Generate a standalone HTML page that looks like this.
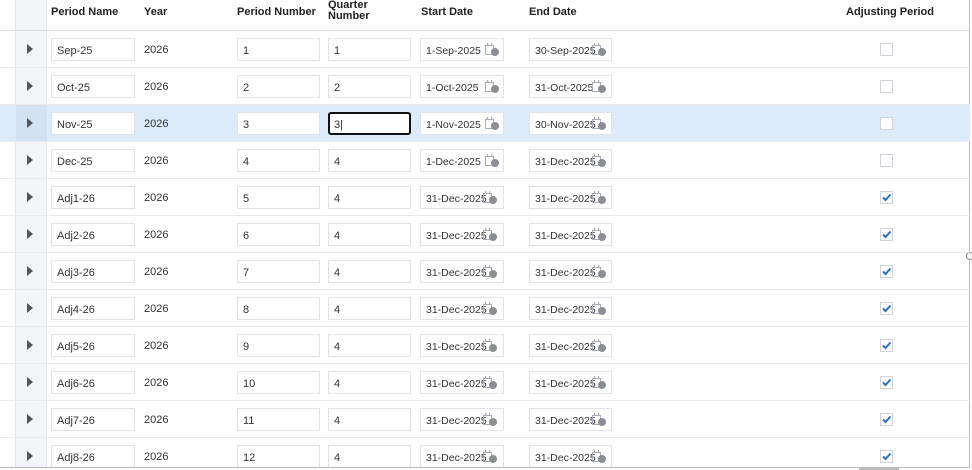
<!DOCTYPE html>
<html><head><meta charset="utf-8"><style>
*{box-sizing:border-box;margin:0;padding:0}
body{width:972px;height:470px;overflow:hidden;background:#fff;font-family:"Liberation Sans",Arial,sans-serif;font-size:11px;color:#333;position:relative}
.lc{position:absolute;left:15px;top:0;width:32px;height:467px;background:#f3f5f8;border-left:1px solid #e2e6ea;border-right:1px solid #e6e9ec}
.hd{position:absolute;top:0;left:0;width:970px;height:31px;border-bottom:1px solid #d8dce0}
.h{position:absolute;font-weight:bold;font-size:11px;color:#222;top:6px}
.r{position:absolute;left:0;width:970px;height:37px;border-bottom:1px solid #e8eaec}
.r.sel{background:#dcebf9}
.r.sel .lcc{background:#d3e2f0}
.lcc{position:absolute;left:16px;top:0;width:31px;height:36px}
.ar{position:absolute;left:27px;top:13px;width:0;height:0;border-left:6px solid #555;border-top:5px solid transparent;border-bottom:5px solid transparent}
.i{position:absolute;top:7px;height:23px;background:#fff;border:1px solid #dfe3e7;padding:6px 0 0 5px;font-size:11px;color:#333;white-space:nowrap;overflow:hidden}
.d{font-size:10.5px}
.y{position:absolute;left:144px;top:13px}
.cal{position:absolute;top:3px;width:16px;height:15px}
.cb{position:absolute;left:880px;top:12px;width:13px;height:13px;border:1px solid #cfd3d7;background:#fff}
.cb.c svg{position:absolute;left:0px;top:0px}
</style></head><body>
<div class="lc"></div>
<div class="hd">
<div class="h" style="left:51px">Period Name</div>
<div class="h" style="left:144px">Year</div>
<div class="h" style="left:237px">Period Number</div>
<div class="h" style="left:328px;top:0;line-height:11px">Quarter<br>Number</div>
<div class="h" style="left:421px">Start Date</div>
<div class="h" style="left:529px">End Date</div>
<div class="h" style="left:846px">Adjusting Period</div>
</div>
<div style="position:absolute;left:969px;top:0;width:1px;height:468px;background:#bbb"></div>
<div style="position:absolute;left:0;top:467px;width:970px;height:1px;background:#bbb"></div>
<div style="position:absolute;left:859px;top:468px;width:40px;height:2px;background:#bbb"></div>
<div style="position:absolute;left:966px;top:252px;width:8px;height:8px;border:1px solid #888;border-radius:50%;background:#fff"></div>

<svg width="0" height="0" style="position:absolute"><defs>
<symbol id="cal" viewBox="0 0 16 15"><rect x="1.5" y="3.5" width="8" height="9" fill="none" stroke="#aab" stroke-width="1"/><rect x="3" y="1" width="1.2" height="3" fill="#aab"/><rect x="7" y="1" width="1.2" height="3" fill="#aab"/><circle cx="11" cy="10" r="4" fill="#8a8f95"/></symbol>
<symbol id="chk" viewBox="0 0 11 11"><path d="M2 5.5 L4.5 8 L9.5 2.5" fill="none" stroke="#2a6fc4" stroke-width="2"/></symbol>
</defs></svg>

<div class="r" style="top:31px"><div class="lcc"></div><div class="ar"></div><div class="i" style="left:51px;width:84px">Sep-25</div><div class="y">2026</div><div class="i" style="left:237px;width:83px">1</div><div class="i" style="left:328px;width:83px">1</div><div class="i d" style="left:420px;width:84px">1-Sep-2025<svg class="cal" style="left:63px"><use href="#cal"/></svg></div><div class="i d" style="left:529px;width:83px">30-Sep-2025<svg class="cal" style="left:61px"><use href="#cal"/></svg></div><div class="cb"></div></div>
<div class="r" style="top:68px"><div class="lcc"></div><div class="ar"></div><div class="i" style="left:51px;width:84px">Oct-25</div><div class="y">2026</div><div class="i" style="left:237px;width:83px">2</div><div class="i" style="left:328px;width:83px">2</div><div class="i d" style="left:420px;width:84px">1-Oct-2025<svg class="cal" style="left:63px"><use href="#cal"/></svg></div><div class="i d" style="left:529px;width:83px">31-Oct-2025<svg class="cal" style="left:61px"><use href="#cal"/></svg></div><div class="cb"></div></div>
<div class="r sel" style="top:105px"><div class="lcc"></div><div class="ar"></div><div class="i" style="left:51px;width:84px">Nov-25</div><div class="y">2026</div><div class="i" style="left:237px;width:83px">3</div><div class="i" style="left:328px;width:83px;border:2px solid #111;border-radius:3px;padding-left:4px;padding-top:5px">3|</div><div class="i d" style="left:420px;width:84px">1-Nov-2025<svg class="cal" style="left:63px"><use href="#cal"/></svg></div><div class="i d" style="left:529px;width:83px">30-Nov-2025<svg class="cal" style="left:61px"><use href="#cal"/></svg></div><div class="cb"></div></div>
<div class="r" style="top:142px"><div class="lcc"></div><div class="ar"></div><div class="i" style="left:51px;width:84px">Dec-25</div><div class="y">2026</div><div class="i" style="left:237px;width:83px">4</div><div class="i" style="left:328px;width:83px">4</div><div class="i d" style="left:420px;width:84px">1-Dec-2025<svg class="cal" style="left:63px"><use href="#cal"/></svg></div><div class="i d" style="left:529px;width:83px">31-Dec-2025<svg class="cal" style="left:61px"><use href="#cal"/></svg></div><div class="cb"></div></div>
<div class="r" style="top:179px"><div class="lcc"></div><div class="ar"></div><div class="i" style="left:51px;width:84px">Adj1-26</div><div class="y">2026</div><div class="i" style="left:237px;width:83px">5</div><div class="i" style="left:328px;width:83px">4</div><div class="i d" style="left:420px;width:84px">31-Dec-2025<svg class="cal" style="left:61px"><use href="#cal"/></svg></div><div class="i d" style="left:529px;width:83px">31-Dec-2025<svg class="cal" style="left:61px"><use href="#cal"/></svg></div><div class="cb c"><svg width="11" height="11"><use href="#chk"/></svg></div></div>
<div class="r" style="top:216px"><div class="lcc"></div><div class="ar"></div><div class="i" style="left:51px;width:84px">Adj2-26</div><div class="y">2026</div><div class="i" style="left:237px;width:83px">6</div><div class="i" style="left:328px;width:83px">4</div><div class="i d" style="left:420px;width:84px">31-Dec-2025<svg class="cal" style="left:61px"><use href="#cal"/></svg></div><div class="i d" style="left:529px;width:83px">31-Dec-2025<svg class="cal" style="left:61px"><use href="#cal"/></svg></div><div class="cb c"><svg width="11" height="11"><use href="#chk"/></svg></div></div>
<div class="r" style="top:253px"><div class="lcc"></div><div class="ar"></div><div class="i" style="left:51px;width:84px">Adj3-26</div><div class="y">2026</div><div class="i" style="left:237px;width:83px">7</div><div class="i" style="left:328px;width:83px">4</div><div class="i d" style="left:420px;width:84px">31-Dec-2025<svg class="cal" style="left:61px"><use href="#cal"/></svg></div><div class="i d" style="left:529px;width:83px">31-Dec-2025<svg class="cal" style="left:61px"><use href="#cal"/></svg></div><div class="cb c"><svg width="11" height="11"><use href="#chk"/></svg></div></div>
<div class="r" style="top:290px"><div class="lcc"></div><div class="ar"></div><div class="i" style="left:51px;width:84px">Adj4-26</div><div class="y">2026</div><div class="i" style="left:237px;width:83px">8</div><div class="i" style="left:328px;width:83px">4</div><div class="i d" style="left:420px;width:84px">31-Dec-2025<svg class="cal" style="left:61px"><use href="#cal"/></svg></div><div class="i d" style="left:529px;width:83px">31-Dec-2025<svg class="cal" style="left:61px"><use href="#cal"/></svg></div><div class="cb c"><svg width="11" height="11"><use href="#chk"/></svg></div></div>
<div class="r" style="top:327px"><div class="lcc"></div><div class="ar"></div><div class="i" style="left:51px;width:84px">Adj5-26</div><div class="y">2026</div><div class="i" style="left:237px;width:83px">9</div><div class="i" style="left:328px;width:83px">4</div><div class="i d" style="left:420px;width:84px">31-Dec-2025<svg class="cal" style="left:61px"><use href="#cal"/></svg></div><div class="i d" style="left:529px;width:83px">31-Dec-2025<svg class="cal" style="left:61px"><use href="#cal"/></svg></div><div class="cb c"><svg width="11" height="11"><use href="#chk"/></svg></div></div>
<div class="r" style="top:364px"><div class="lcc"></div><div class="ar"></div><div class="i" style="left:51px;width:84px">Adj6-26</div><div class="y">2026</div><div class="i" style="left:237px;width:83px">10</div><div class="i" style="left:328px;width:83px">4</div><div class="i d" style="left:420px;width:84px">31-Dec-2025<svg class="cal" style="left:61px"><use href="#cal"/></svg></div><div class="i d" style="left:529px;width:83px">31-Dec-2025<svg class="cal" style="left:61px"><use href="#cal"/></svg></div><div class="cb c"><svg width="11" height="11"><use href="#chk"/></svg></div></div>
<div class="r" style="top:401px"><div class="lcc"></div><div class="ar"></div><div class="i" style="left:51px;width:84px">Adj7-26</div><div class="y">2026</div><div class="i" style="left:237px;width:83px">11</div><div class="i" style="left:328px;width:83px">4</div><div class="i d" style="left:420px;width:84px">31-Dec-2025<svg class="cal" style="left:61px"><use href="#cal"/></svg></div><div class="i d" style="left:529px;width:83px">31-Dec-2025<svg class="cal" style="left:61px"><use href="#cal"/></svg></div><div class="cb c"><svg width="11" height="11"><use href="#chk"/></svg></div></div>
<div class="r" style="top:438px;height:29px;border-bottom:none;overflow:hidden"><div class="lcc"></div><div class="ar"></div><div class="i" style="left:51px;width:84px">Adj8-26</div><div class="y">2026</div><div class="i" style="left:237px;width:83px">12</div><div class="i" style="left:328px;width:83px">4</div><div class="i d" style="left:420px;width:84px">31-Dec-2025<svg class="cal" style="left:61px"><use href="#cal"/></svg></div><div class="i d" style="left:529px;width:83px">31-Dec-2025<svg class="cal" style="left:61px"><use href="#cal"/></svg></div><div class="cb c"><svg width="11" height="11"><use href="#chk"/></svg></div></div>
</body></html>
